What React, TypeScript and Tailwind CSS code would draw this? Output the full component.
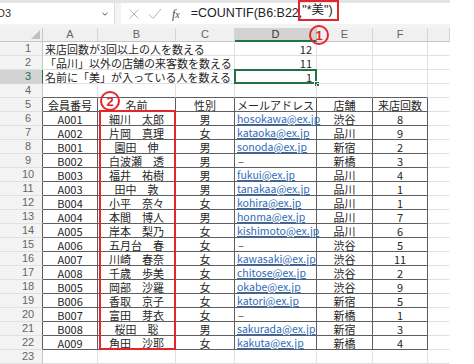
import React from "react";

type Row = [string, string, string, string, string, string];

const data: Row[] = [
  ["A001", "細川　太郎", "男", "hosokawa@ex.jp", "渋谷", "8"],
  ["A002", "片岡　真理", "女", "kataoka@ex.jp", "品川", "9"],
  ["B001", "園田　伸", "男", "sonoda@ex.jp", "新宿", "2"],
  ["B002", "白波瀬　透", "男", "", "新橋", "3"],
  ["B003", "福井　祐樹", "男", "fukui@ex.jp", "品川", "4"],
  ["A003", "田中　敦", "男", "tanakaa@ex.jp", "品川", "1"],
  ["B004", "小平　奈々", "女", "kohira@ex.jp", "品川", "1"],
  ["A004", "本間　博人", "男", "honma@ex.jp", "品川", "7"],
  ["A005", "岸本　梨乃", "女", "kishimoto@ex.jp", "品川", "6"],
  ["A006", "五月台　春", "女", "", "渋谷", "5"],
  ["A007", "川崎　春奈", "女", "kawasaki@ex.jp", "渋谷", "11"],
  ["A008", "千歳　歩美", "女", "chitose@ex.jp", "渋谷", "2"],
  ["B005", "岡部　沙羅", "女", "okabe@ex.jp", "渋谷", "9"],
  ["B006", "香取　京子", "女", "katori@ex.jp", "新宿", "5"],
  ["B007", "富田　芽衣", "女", "", "新橋", "1"],
  ["B008", "桜田　聡", "男", "sakurada@ex.jp", "新宿", "3"],
  ["A009", "角田　沙耶", "女", "kakuta@ex.jp", "新橋", "4"],
];

const notes = [
  "来店回数が3回以上の人を数える",
  "「品川」以外の店舗の来客数を数える",
  "名前に「美」が入っている人を数える",
];
const counts = ["12", "11", "1"];
const headers = ["会員番号", "名前", "性別", "メールアドレス", "店舗", "来店回数"];
const letters = ["A", "B", "C", "D", "E", "F", ""];

const jp = "font-['Noto_Sans_CJK_JP','Noto_Sans',sans-serif]";

// content + alignment for a sheet cell (r = 1..23, c = 0..6 for A..G)
function cellContent(r: number, c: number): { text: React.ReactNode; align: string } {
  if (r <= 3) {
    if (c === 0) return { text: notes[r - 1], align: "justify-start pl-[2px]" };
    if (c === 3) return { text: counts[r - 1], align: "justify-end pr-[4px]" };
  }
  if (r === 5 && c <= 5) return { text: headers[c], align: "justify-center" };
  if (r >= 6 && r <= 22 && c <= 5) {
    const v = data[r - 6][c];
    if (c === 3) {
      if (!v) return { text: <span className="text-[#444]">–</span>, align: "justify-start pl-[3px]" };
      return {
        text: (
          <span className="text-[10.5px] text-[#2f6bb8] underline decoration-[#2f6bb8]">{v}</span>
        ),
        align: "justify-start pl-[2px]",
      };
    }
    return { text: v, align: "justify-center" };
  }
  return { text: "", align: "" };
}

function Cell({ r, c }: { r: number; c: number }) {
  const inTable = r >= 5 && r <= 22 && c <= 5;
  const darkBottom = inTable || (r === 4 && c <= 5);
  const overflowRow = r <= 3 && (c === 0 || c === 1);
  const rightCls =
    c === 6
      ? "border-r-transparent"
      : inTable
        ? "border-r-[#5e5e5e]"
        : overflowRow
          ? "border-r-transparent"
          : "border-r-[#e0e0e0]";
  const bottomCls = darkBottom ? "border-b-[#5e5e5e]" : "border-b-[#e0e0e0]";
  const { text, align } = cellContent(r, c);
  const selected = r === 3 && c === 3;
  return (
    <div
      className={`relative h-[14px] border-r border-b ${rightCls} ${bottomCls} flex items-center ${align} whitespace-nowrap overflow-visible text-[11px] leading-[14px] text-[#262626]`}
    >
      {text}
      {selected && (
        <>
          <div className="absolute left-[-1px] top-[-1px] right-[-1px] bottom-[-1px] border-2 border-[#217346]" />
          <div className="absolute right-[-4px] bottom-[-4px] w-[6px] h-[6px] bg-[#217346] border border-white" />
        </>
      )}
    </div>
  );
}

function Circled({ n }: { n: string }) {
  return (
    <div className="w-[20px] h-[20px] rounded-full border-[2.5px] border-[#e3262b] flex items-center justify-center text-[#e3262b] font-bold text-[13px] leading-none font-['Liberation_Sans',sans-serif]">
      {n}
    </div>
  );
}

export default function App() {
  const rows = Array.from({ length: 23 }, (_, i) => i + 1);
  return (
    <div className={`relative w-[474px] h-[364px] bg-white overflow-hidden ${jp}`}>
      <div className="w-[450px]">
        {/* ribbon edge */}
        <div className="h-[3px] bg-[#e4e4e4]" />
        {/* formula bar */}
        <div className="flex h-[21px] bg-[#f3f3f3]">
          <div className="w-[115px] bg-white flex items-center justify-between pr-[5px] border-r border-[#dadada]">
            <span className="ml-[-3px] text-[11px] text-[#333] font-['Liberation_Sans',sans-serif]">D3</span>
            <svg width="8" height="6" viewBox="0 0 8 6">
              <path d="M1.5 1.8 L4 4.2 L6.5 1.8" fill="none" stroke="#555" strokeWidth="1" />
            </svg>
          </div>
          <div className="w-[6px]" />
          <div className="flex-1 bg-white flex items-center">
            <svg width="12" height="12" viewBox="0 0 12 12" className="ml-[7px]">
              <path d="M1.5 1.5 L10.5 10.5 M10.5 1.5 L1.5 10.5" stroke="#b4b4b4" strokeWidth="1" />
            </svg>
            <svg width="14" height="12" viewBox="0 0 14 12" className="ml-[8px]">
              <path d="M1 6.5 L5 10.5 L13 1" fill="none" stroke="#b4b4b4" strokeWidth="1" />
            </svg>
            <span className="ml-[10px] text-[12px] italic text-[#444] font-['Liberation_Serif',serif]">
              f<span className="text-[10px]">x</span>
            </span>
            <span className="ml-[11px] text-[12.5px] text-[#222] font-['Liberation_Sans','Noto_Sans_CJK_JP',sans-serif]">
              =COUNTIF(B6:B22,
            </span>
            <span className="relative self-start top-[-3px] h-[21px] ml-[-4px] pl-[2px] pr-[4px] border-2 border-[#e3262b] flex items-center text-[12.5px] text-[#222] font-['Liberation_Sans','Noto_Sans_CJK_JP',sans-serif]">
              "*美")
            </span>
          </div>
        </div>
        <div className="h-[4px] bg-[#f3f3f3]" />

        {/* sheet */}
        <div className="relative grid grid-cols-[43px_55px_78px_59px_82px_56px_55px_22px]">
          {/* column headers */}
          <div className="h-[14px] bg-[#f0f0f0] border-r border-b border-[#c6c6c6] relative">
            <svg width="9" height="9" viewBox="0 0 9 9" className="absolute right-[2px] bottom-[2px]">
              <path d="M9 0 L9 9 L0 9 Z" fill="#c0c0c0" />
            </svg>
          </div>
          {letters.map((l, i) => (
            <div
              key={l + i}
              className={
                i === 3
                  ? "h-[14px] bg-[#d3d3d3] border-r border-r-[#c6c6c6] border-b-2 border-b-[#217346] flex items-center justify-center text-[11px] text-[#333] font-['Liberation_Sans',sans-serif]"
                  : "h-[14px] bg-[#f0f0f0] border-r border-r-[#d6d6d6] border-b border-b-[#c6c6c6] flex items-center justify-center text-[11px] text-[#666] font-['Liberation_Sans',sans-serif]"
              }
            >
              {l}
            </div>
          ))}

          {rows.map((r) => (
            <React.Fragment key={r}>
              <div
                className={`h-[14px] pl-[14px] border-r border-b flex items-center justify-center text-[11px] font-['Liberation_Sans',sans-serif] ${
                  r === 3
                    ? "bg-[#d3d3d3] text-[#217346] border-r-[#217346] border-b-[#d6d6d6]"
                    : r >= 5 && r <= 22
                      ? "bg-[#f3f3f3] text-[#666] border-r-[#5e5e5e] border-b-[#e0e0e0]"
                      : "bg-[#f3f3f3] text-[#666] border-r-[#c6c6c6] border-b-[#e0e0e0]"
                }`}
              >
                {r}
              </div>
              {[0, 1, 2, 3, 4, 5, 6].map((c) => (
                <Cell key={c} r={r} c={c} />
              ))}
            </React.Fragment>
          ))}

          {/* annotation: name column box */}
          <div className="absolute left-[99px] top-[82px] w-[77px] h-[240px] border-2 border-[#e3262b] pointer-events-none" />
          <div className="absolute left-[100px] top-[63px]">
            <Circled n="2" />
          </div>
        </div>
      </div>

      {/* annotation ① */}
      <div className="absolute left-[309px] top-[25px]">
        <Circled n="1" />
      </div>
    </div>
  );
}
